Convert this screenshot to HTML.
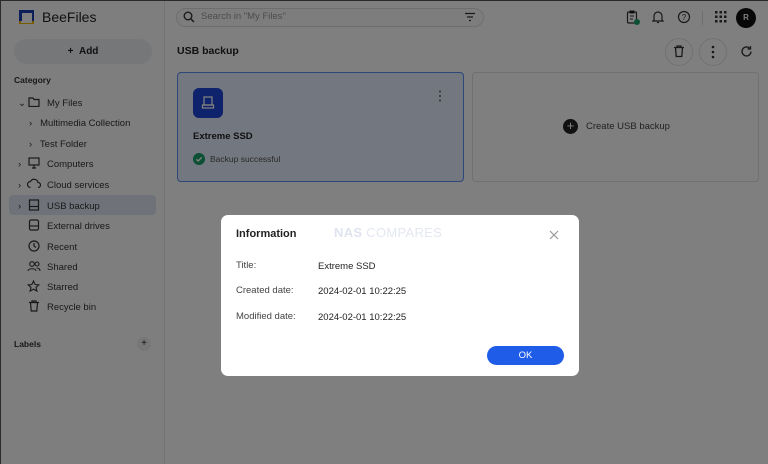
<!DOCTYPE html>
<html><head><meta charset="utf-8"><style>
*{box-sizing:border-box;margin:0;padding:0}
body{width:768px;height:464px;overflow:hidden;font-family:"Liberation Sans",sans-serif;background:#fff;position:relative;color:#222}
.abs{position:absolute}
.side{left:0;top:0;width:165px;height:464px;background:#fdfdfd;border-right:1px solid #e6e6e6}
.nav{position:absolute;left:0;font-size:9.5px;color:#333;height:20px;line-height:20px;white-space:nowrap;margin-top:2px}
.ov{left:0;top:0;width:768px;height:464px;background:rgba(0,0,0,0.5)}
.dlg{left:221px;top:215px;width:358px;height:161px;background:#fff;border-radius:7px}
.lbl{position:absolute;left:15px;font-size:9.5px;color:#444}
.val{position:absolute;left:97px;font-size:9.5px;color:#222}
</style></head><body>
<div class="abs side"></div>
<div class="abs" style="left:0;top:0;width:768px;height:1px;background:#555"></div>
<div class="abs" style="left:0;top:0;width:1px;height:464px;background:#555"></div>
<svg class="abs" style="left:18px;top:9px" width="17" height="16" viewBox="0 0 17 16"><rect x="1" y="1" width="15" height="14" fill="#1b3fb0"/><rect x="4" y="4" width="10" height="8" fill="#fff"/><rect x="1" y="12" width="15" height="3" fill="#f0b400"/><rect x="3" y="12" width="11" height="2" fill="#fff"/></svg>
<div class="abs" style="left:42px;top:9px;font-size:14px;color:#222">BeeFiles</div>
<div class="abs" style="left:14px;top:39px;width:138px;height:25px;border-radius:13px;background:#eceef1;text-align:center;line-height:25px;font-size:10px;font-weight:bold;color:#222">+&nbsp;&nbsp;Add</div>
<div class="abs" style="left:14px;top:75px;font-size:8.5px;font-weight:bold;color:#333">Category</div>
<div class="abs" style="left:9px;top:195px;width:147px;height:20px;background:#dfe6f2;border-radius:4px"></div>
<div class="nav" style="top:92px;left:18px">⌄</div>
<div class="nav" style="top:92px;left:47px">My Files</div>
<svg class="abs" style="left:28px;top:97px" width="12" height="10"><path d="M1 1h4l1 1.5h5v7h-10z" fill="none" stroke="#333" stroke-width="1.2"/></svg>
<div class="nav" style="top:112px;left:29px">›&nbsp;&nbsp; Multimedia Collection</div>
<div class="nav" style="top:133px;left:29px">›&nbsp;&nbsp; Test Folder</div>
<div class="nav" style="top:153px;left:18px">›</div><div class="nav" style="top:153px;left:47px">Computers</div>
<svg class="abs" style="left:28px;top:157px" width="12" height="12"><rect x="1" y="1" width="10" height="7" fill="none" stroke="#333" stroke-width="1.2"/><path d="M4 11h4M6 8v3" stroke="#333" stroke-width="1.2"/></svg>
<div class="nav" style="top:174px;left:18px">›</div><div class="nav" style="top:174px;left:47px">Cloud services</div>
<svg class="abs" style="left:27px;top:178px" width="14" height="12"><path d="M3.5 9.5a3 3 0 0 1 0-6 4 4 0 0 1 7.5 1 2.5 2.5 0 0 1 0 5" fill="none" stroke="#333" stroke-width="1.2"/></svg>
<div class="nav" style="top:195px;left:18px">›</div><div class="nav" style="top:195px;left:47px">USB backup</div>
<svg class="abs" style="left:28px;top:199px" width="12" height="12"><rect x="1.5" y="1" width="9" height="10" fill="none" stroke="#333" stroke-width="1.2"/><path d="M1.5 7.5h9" stroke="#333" stroke-width="1.2"/></svg>
<div class="nav" style="top:215px;left:47px">External drives</div>
<svg class="abs" style="left:28px;top:219px" width="12" height="12"><rect x="1.5" y="1" width="9" height="10" rx="1.5" fill="none" stroke="#333" stroke-width="1.2"/><path d="M1.5 7h9" stroke="#333" stroke-width="1.2"/></svg>
<div class="nav" style="top:236px;left:47px">Recent</div>
<svg class="abs" style="left:28px;top:240px" width="12" height="12"><circle cx="6" cy="6" r="5" fill="none" stroke="#333" stroke-width="1.2"/><path d="M6 3v3l2 1.5" fill="none" stroke="#333" stroke-width="1.2"/></svg>
<div class="nav" style="top:256px;left:47px">Shared</div>
<svg class="abs" style="left:27px;top:260px" width="14" height="12"><circle cx="5" cy="4" r="2.3" fill="none" stroke="#333" stroke-width="1.1"/><circle cx="10" cy="4" r="2" fill="none" stroke="#333" stroke-width="1.1"/><path d="M1 11c0-3 8-3 8 0M9.5 8c2 0 3.5 1 3.5 3" fill="none" stroke="#333" stroke-width="1.1"/></svg>
<div class="nav" style="top:276px;left:47px">Starred</div>
<svg class="abs" style="left:27px;top:280px" width="13" height="13"><path d="M6.5 1l1.6 3.5 3.8.4-2.9 2.5.9 3.7-3.4-2-3.4 2 .9-3.7L1.1 4.9l3.8-.4z" fill="none" stroke="#333" stroke-width="1.1"/></svg>
<div class="nav" style="top:296px;left:47px">Recycle bin</div>
<svg class="abs" style="left:28px;top:300px" width="12" height="12"><path d="M1 2.5h10M4 2.5V1h4v1.5M2.5 2.5l.7 8.5h5.6l.7-8.5" fill="none" stroke="#333" stroke-width="1.2"/></svg>
<div class="abs" style="left:14px;top:339px;font-size:8.5px;font-weight:bold;color:#333">Labels</div>
<div class="abs" style="left:137px;top:337px;width:14px;height:14px;border-radius:7px;background:#eee;text-align:center;font-size:10px;line-height:14px">+</div>
<div class="abs" style="left:176px;top:8px;width:308px;height:19px;border:1px solid #ddd;border-radius:10px;background:#fafafa"></div>
<svg class="abs" style="left:183px;top:11px" width="12" height="12"><circle cx="5" cy="5" r="3.8" fill="none" stroke="#333" stroke-width="1.4"/><path d="M8 8l3 3" stroke="#333" stroke-width="1.5"/></svg>
<div class="abs" style="left:201px;top:11px;font-size:9.5px;color:#999">Search in "My Files"</div>
<svg class="abs" style="left:464px;top:12px" width="12" height="10"><path d="M1 1.5h10M3 5h6M5 8.5h2" stroke="#333" stroke-width="1.3"/></svg>
<svg class="abs" style="left:626px;top:10px" width="14" height="15"><rect x="1.5" y="2" width="9" height="11" rx="1" fill="none" stroke="#333" stroke-width="1.2"/><path d="M4 1h4v2H4zM4 6h4M4 9h3" stroke="#333" stroke-width="1"/><circle cx="11" cy="12" r="3" fill="#1aa36b"/></svg>
<svg class="abs" style="left:652px;top:10px" width="12" height="14"><path d="M2 10V6a4 4 0 0 1 8 0v4l1 1H1z M5 12.5h2" fill="none" stroke="#333" stroke-width="1.2"/></svg>
<svg class="abs" style="left:677px;top:10px" width="14" height="14"><circle cx="7" cy="7" r="5.5" fill="none" stroke="#333" stroke-width="1.2"/><text x="7" y="10" font-size="8" text-anchor="middle" font-family="Liberation Sans" fill="#333">?</text></svg>
<div class="abs" style="left:702px;top:11px;width:1px;height:14px;background:#ddd"></div>
<svg class="abs" style="left:715px;top:11px" width="12" height="12"><g fill="#333"><rect x="0" y="0" width="2.5" height="2.5"/><rect x="4.5" y="0" width="2.5" height="2.5"/><rect x="9" y="0" width="2.5" height="2.5"/><rect x="0" y="4.5" width="2.5" height="2.5"/><rect x="4.5" y="4.5" width="2.5" height="2.5"/><rect x="9" y="4.5" width="2.5" height="2.5"/><rect x="0" y="9" width="2.5" height="2.5"/><rect x="4.5" y="9" width="2.5" height="2.5"/><rect x="9" y="9" width="2.5" height="2.5"/></g></svg>
<div class="abs" style="left:736px;top:8px;width:20px;height:20px;border-radius:10px;background:#111;color:#fff;font-size:8px;font-weight:bold;text-align:center;line-height:20px">R</div>
<div class="abs" style="left:177px;top:45px;font-size:10.5px;font-weight:bold;color:#222">USB backup</div>
<div class="abs" style="left:665px;top:38px;width:28px;height:28px;border-radius:14px;border:1px solid #e3e3e3"></div>
<svg class="abs" style="left:673px;top:45px" width="12" height="13"><path d="M1 2.5h10M4 2.5V1h4v1.5M2.5 2.5l.7 9h5.6l.7-9" fill="none" stroke="#333" stroke-width="1.3"/></svg>
<div class="abs" style="left:699px;top:38px;width:28px;height:28px;border-radius:14px;border:1px solid #e3e3e3"></div>
<svg class="abs" style="left:711px;top:45px" width="4" height="14"><circle cx="2" cy="2" r="1.3" fill="#333"/><circle cx="2" cy="7" r="1.3" fill="#333"/><circle cx="2" cy="12" r="1.3" fill="#333"/></svg>
<svg class="abs" style="left:740px;top:45px" width="13" height="13"><path d="M11 6.5a4.5 4.5 0 1 1-1.3-3.2M10.5 1v3h-3" fill="none" stroke="#333" stroke-width="1.3"/></svg>
<div class="abs" style="left:177px;top:72px;width:287px;height:110px;border:1px solid #5b8ef0;border-radius:4px;background:#e6eeff"></div>
<div class="abs" style="left:193px;top:88px;width:30px;height:30px;border-radius:6px;background:#1c46d6"></div>
<svg class="abs" style="left:200px;top:95px" width="16" height="16"><rect x="4" y="2" width="8" height="8" fill="none" stroke="#fff" stroke-width="1.3"/><path d="M2.5 10h11v3h-11z" fill="none" stroke="#fff" stroke-width="1.3"/></svg>
<svg class="abs" style="left:438px;top:90px" width="4" height="12"><circle cx="2" cy="1.5" r="1.1" fill="#777"/><circle cx="2" cy="6" r="1.1" fill="#777"/><circle cx="2" cy="10.5" r="1.1" fill="#777"/></svg>
<div class="abs" style="left:193px;top:131px;font-size:9.5px;font-weight:bold;color:#222">Extreme SSD</div>
<svg class="abs" style="left:193px;top:153px" width="12" height="12"><circle cx="6" cy="6" r="6" fill="#16a06a"/><path d="M3.3 6.2l1.8 1.8 3.6-3.6" fill="none" stroke="#fff" stroke-width="1.4"/></svg>
<div class="abs" style="left:210px;top:154px;font-size:8.5px;color:#555">Backup successful</div>
<div class="abs" style="left:472px;top:72px;width:287px;height:110px;border:1px solid #e0e0e0;border-radius:4px;background:#fff"></div>
<div class="abs" style="left:563px;top:119px;width:15px;height:15px;border-radius:8px;background:#222;color:#fff;text-align:center;line-height:14px;font-size:13px">+</div>
<div class="abs" style="left:586px;top:121px;font-size:9.5px;color:#444">Create USB backup</div>
<div class="abs ov"></div>
<div class="abs dlg">
 <div class="abs" style="left:15px;top:13px;font-size:11px;font-weight:bold;color:#222">Information</div>
 <div class="abs" style="left:113px;top:10px;font-size:13px;color:#e3e7f0;letter-spacing:0.3px"><b style="color:#dfe4ef">NAS</b> COMPARES</div>
 <svg class="abs" style="left:328px;top:15px" width="10" height="10"><path d="M1 1l8 8M9 1l-8 8" stroke="#999" stroke-width="1.2"/></svg>
 <div class="lbl" style="top:45px">Title:</div><div class="val" style="top:46px">Extreme SSD</div>
 <div class="lbl" style="top:70px">Created date:</div><div class="val" style="top:71px">2024-02-01 10:22:25</div>
 <div class="lbl" style="top:96px">Modified date:</div><div class="val" style="top:97px">2024-02-01 10:22:25</div>
 <div class="abs" style="left:266px;top:131px;width:77px;height:19px;border-radius:10px;background:#1f5ce8;color:#fff;font-size:9.5px;text-align:center;line-height:19px">OK</div>
</div>
</body></html>
